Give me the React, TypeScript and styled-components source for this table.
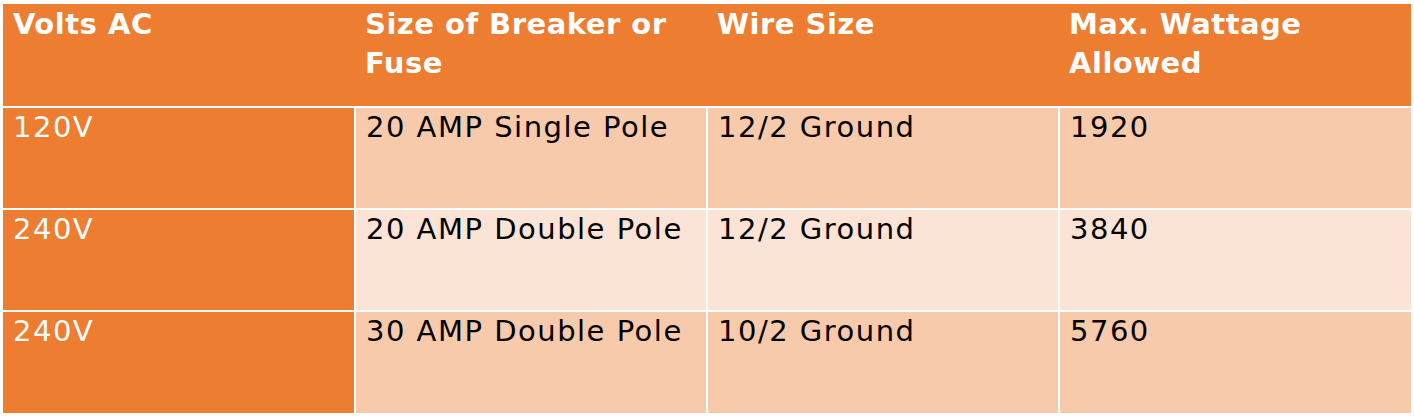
import React from 'react';
import styled, { createGlobalStyle } from 'styled-components';

const GlobalStyle = createGlobalStyle`
	body {
		margin: 0;
		background: #ffffff;
		font-family: "DejaVu Sans", "Liberation Sans", sans-serif;
	}
`;

const Page = styled.div`
	padding: 4px 3px 0 3px;
`;

const Table = styled.table`
	width: 1408px;
	border-collapse: collapse;
	table-layout: fixed;
`;

const HeadCell = styled.th`
	background: #ed7d31;
	color: #ffffff;
	font-weight: bold;
	font-size: 29px;
	letter-spacing: 0.5px;
	line-height: 39px;
	text-align: left;
	vertical-align: top;
	padding: 1px 10px 0 10px;
	height: 103px;
	box-sizing: border-box;
	border-bottom: 2px solid #ffffff;
`;

const Cell = styled.td<{ $tone: 'dark' | 'light' | 'accent' }>`
	background: ${(p) => (p.$tone === 'accent' ? '#ed7d31' : p.$tone === 'dark' ? '#f7caac' : '#fbe4d5')};
	color: ${(p) => (p.$tone === 'accent' ? '#ffffff' : '#000000')};
	font-size: 29px;
	letter-spacing: 1.5px;
	line-height: 38px;
	vertical-align: top;
	padding: 0 10px;
	height: 102px;
	box-sizing: border-box;
	border: 2px solid #ffffff;
	border-top: none;
	&:first-child { border-left: none; }
	&:last-child { border-right: none; }
`;

const Row = styled.tr`
	&:last-child td { border-bottom: none; }
`;

const rows = [
	['120V', '20 AMP Single Pole', '12/2 Ground', '1920'],
	['240V', '20 AMP Double Pole', '12/2 Ground', '3840'],
	['240V', '30 AMP Double Pole', '10/2 Ground', '5760'],
];

export default function App() {
	return (
		<Page>
			<GlobalStyle />
			<Table>
				<thead>
					<tr>
						<HeadCell>Volts AC</HeadCell>
						<HeadCell>Size of Breaker or Fuse</HeadCell>
						<HeadCell>Wire Size</HeadCell>
						<HeadCell>Max. Wattage Allowed</HeadCell>
					</tr>
				</thead>
				<tbody>
					{rows.map((r, i) => (
						<Row key={i}>
							{r.map((c, j) => (
								<Cell key={j} $tone={j === 0 ? 'accent' : i === 1 ? 'light' : 'dark'}>
									{c}
								</Cell>
							))}
						</Row>
					))}
				</tbody>
			</Table>
		</Page>
	);
}
